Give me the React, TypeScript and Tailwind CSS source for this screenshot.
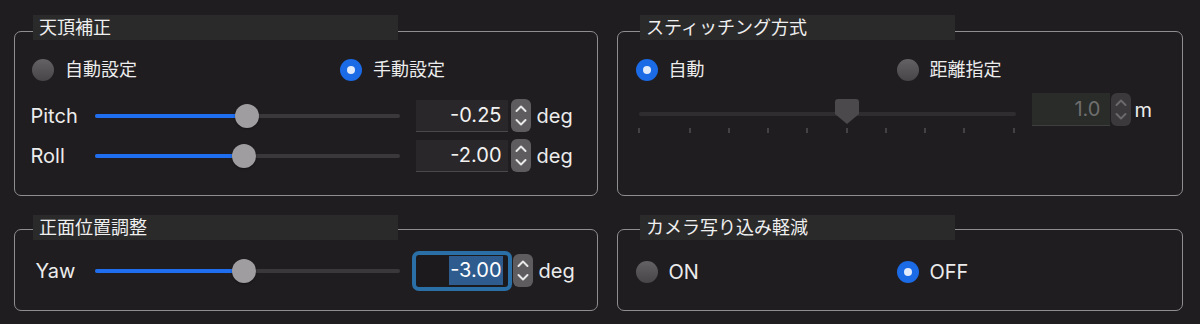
import React from "react";

interface GroupProps {
  title: string;
  titleClass: string;
  boxClass: string;
  children: React.ReactNode;
}

const Group: React.FC<GroupProps> = ({ title, titleClass, boxClass, children }) => (
  <div className="flex flex-col">
    <div
      className={`relative z-10 h-[25px] bg-[#2b2a2b] pl-[6px] text-[18px] leading-[25px] text-[#efefef] ${titleClass}`}
    >
      {title}
    </div>
    <div className={`rounded-[7px] border-[1.5px] border-[#8e8d90] ${boxClass}`}>{children}</div>
  </div>
);

const Radio = ({ checked = false }: { checked?: boolean }) =>
  checked ? (
    <span className="flex h-[22px] w-[22px] items-center justify-center rounded-full bg-[#1b6ae6]">
      <span className="h-[8px] w-[8px] rounded-full bg-[#e2ebfb]" />
    </span>
  ) : (
    <span className="h-[22px] w-[22px] rounded-full bg-linear-to-b from-[#646265] to-[#474548]" />
  );

const Option = ({ label, checked, width, latin }: { label: string; checked?: boolean; width?: string; latin?: boolean }) => (
  <div className={`flex items-center gap-[11px] ${width ?? ""}`}>
    <Radio checked={checked} />
    <span className={latin ? "text-[20px] text-[#ececec]" : "text-[18px] text-[#ececec]"}>{label}</span>
  </div>
);

const Stepper = ({ disabled = false }: { disabled?: boolean }) => (
  <div
    className={`flex h-[33px] w-[20px] items-center justify-center rounded-[6px] ${
      disabled ? "bg-[#3b393c]" : "bg-[#5e5c5f]"
    }`}
  >
    <svg width="20" height="33" viewBox="0 0 20 33" fill="none">
      <g
        stroke={disabled ? "#6b696c" : "#e8e8e8"}
        strokeWidth="2"
        strokeLinecap="round"
        strokeLinejoin="round"
      >
        <polyline points="5.5,12 10,7.5 14.5,12" />
        <polyline points="5.5,21 10,25.5 14.5,21" />
      </g>
    </svg>
  </div>
);

// slider: fill/thumb positions written out per row
const Slider = ({ fill, thumb }: { fill: string; thumb: string }) => (
  <div className="relative h-[24px] w-[305px]">
    <div className="absolute left-0 right-0 top-[10px] h-[4px] rounded-full bg-[#3a383b]" />
    <div className={`absolute left-0 top-[10px] h-[4px] rounded-full bg-[#1f6ef0] ${fill}`} />
    <div className={`absolute top-0 h-[24px] w-[24px] rounded-full bg-[#9f9da0] shadow-[0_1px_2px_rgba(0,0,0,0.4)] ${thumb}`} />
  </div>
);

const Field = ({ value }: { value: string }) => (
  <div className="flex h-[32px] w-[92px] items-center justify-end border-b border-[#4a484b] bg-[#29272a] pr-[6px] text-[20px] text-[#f2f2f2]">
    {value}
  </div>
);

interface RowProps {
  label: string;
  pad: string;
  labelW: string;
  value: string;
  fill: string;
  thumb: string;
}

const SliderRow: React.FC<RowProps> = ({ label, pad, labelW, value, fill, thumb }) => (
  <div className={`flex h-[32px] items-center ${pad}`}>
    <span className={`text-[20px] text-[#ececec] ${labelW}`}>{label}</span>
    <Slider fill={fill} thumb={thumb} />
    <div className="ml-[16px]">
      <Field value={value} />
    </div>
    <div className="ml-[3px]">
      <Stepper />
    </div>
    <span className="ml-[6px] text-[20px] text-[#ececec]">deg</span>
  </div>
);

const ticks = [1, 52, 91, 130, 169, 209, 248, 287, 326, 376];

const DistanceSlider = () => (
  <svg width="380" height="40" viewBox="0 0 380 40">
    <rect x="1" y="16" width="377" height="4" rx="2" fill="#2f2d30" />
    {ticks.map((x) => (
      <rect key={x} x={x - 0.5} y="32" width="1" height="5" fill="#6a686b" />
    ))}
    <path d="M197,6 Q197,3 200,3 L218,3 Q221,3 221,6 L221,18 L209,28 L197,18 Z" fill="#4b494c" />
  </svg>
);

export default function App() {
  return (
    <div className="h-[324px] w-[1200px] overflow-hidden bg-[#1f1d20] pl-[14px] pt-[15px] font-['Inter','Noto_Sans_CJK_JP',sans-serif]">
      <div className="grid grid-cols-[584px_566px] gap-x-[19px] gap-y-[19px]">
        <Group title="天頂補正" titleClass="ml-[19px] w-[365px]" boxClass="-mt-[9px] h-[165px] pt-[26.5px]">
          <div className="flex h-[22px] items-center pl-[17px]">
            <Option label="自動設定" width="w-[308px]" />
            <Option label="手動設定" checked />
          </div>
          <div className="mt-[19px] flex flex-col gap-[8px]">
            <SliderRow label="Pitch" pad="pl-[15.5px]" labelW="w-[64px]" value="-0.25" fill="w-[152px]" thumb="left-[140px]" />
            <SliderRow label="Roll" pad="pl-[15.5px]" labelW="w-[64px]" value="-2.00" fill="w-[149px]" thumb="left-[137px]" />
          </div>
        </Group>

        <Group title="スティッチング方式" titleClass="ml-[23px] w-[315px]" boxClass="-mt-[9px] h-[165px] pt-[26.5px]">
          <div className="flex h-[22px] items-center pl-[17.5px]">
            <Option label="自動" checked width="w-[261px]" />
            <Option label="距離指定" />
          </div>
          <div className="mt-[12px] flex items-start pl-[19.5px]">
            <div className="mt-[3px]">
              <DistanceSlider />
            </div>
            <div className="ml-[14px] flex h-[33px] w-[78px] items-center justify-end border-b border-[#3d403c] bg-[#2a2c2a] pr-[9px] text-[20px] text-[#6e6e6e]">
              1.0
            </div>
            <div className="ml-[1px]">
              <Stepper disabled />
            </div>
            <span className="ml-[4px] mt-[2px] text-[20px] text-[#ececec]">m</span>
          </div>
        </Group>

        <Group title="正面位置調整" titleClass="ml-[19px] w-[365px]" boxClass="-mt-[11px] h-[82px] pt-[24.5px]">
          <div className="flex h-[32px] items-center pl-[20.5px]">
            <span className="w-[59px] text-[20px] text-[#ececec]">Yaw</span>
            <Slider fill="w-[149px]" thumb="left-[137px]" />
            <div className="ml-[16px] flex h-[32px] w-[92px] items-center justify-end rounded-[3px] bg-[#1c1a1d] pr-[5px] text-[20px] text-white ring-4 ring-[#2a6fa5]">
              <span className="bg-[#2e5c8e] px-[1px] leading-[29px]">-3.00</span>
            </div>
            <div className="ml-[5px]">
              <Stepper />
            </div>
            <span className="ml-[6px] text-[20px] text-[#ececec]">deg</span>
          </div>
        </Group>

        <Group title="カメラ写り込み軽減" titleClass="ml-[23px] w-[315px]" boxClass="-mt-[11px] h-[82px] pt-[30.5px]">
          <div className="flex h-[22px] items-center pl-[17.5px]">
            <Option label="ON" width="w-[261px]" latin />
            <Option label="OFF" checked latin />
          </div>
        </Group>
      </div>
    </div>
  );
}
